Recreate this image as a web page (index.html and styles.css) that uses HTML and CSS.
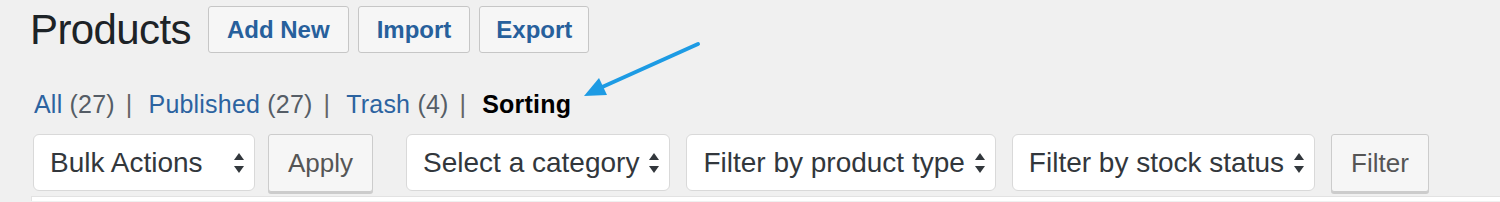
FILE: index.html
```html
<!DOCTYPE html>
<html lang="en">
<head>
  <meta charset="UTF-8">
  <meta name="viewport" content="width=device-width, initial-scale=1.0">
  <title>Products</title>
  <link rel="stylesheet" href="styles.css">
</head>
<body>
  <div class="wrap">
    <div class="heading">
      <h1>Products</h1>
      <a class="page-action" href="#">Add New</a>
      <a class="page-action" href="#">Import</a>
      <a class="page-action export" href="#">Export</a>
    </div>

    <ul class="subsubsub">
      <li><a href="#">All</a> <span class="count">(27)</span><span class="sep">|</span></li>
      <li><a href="#">Published</a> <span class="count">(27)</span><span class="sep">|</span></li>
      <li><a href="#">Trash</a> <span class="count">(4)</span><span class="sep">|</span></li>
      <li><a class="current" href="#">Sorting</a></li>
    </ul>

    <div class="tablenav">
      <div class="select bulk">
        <span>Bulk Actions</span>
        <svg class="updown" viewBox="0 0 10 20"><polygon points="0,7 5,0 10,7"/><polygon points="0,13 10,13 5,20"/></svg>
      </div>
      <button class="btn">Apply</button>

      <div class="filters">
        <div class="select">
          <span>Select a category</span>
          <svg class="updown" viewBox="0 0 10 20"><polygon points="0,7 5,0 10,7"/><polygon points="0,13 10,13 5,20"/></svg>
        </div>
        <div class="select">
          <span>Filter by product type</span>
          <svg class="updown" viewBox="0 0 10 20"><polygon points="0,7 5,0 10,7"/><polygon points="0,13 10,13 5,20"/></svg>
        </div>
        <div class="select">
          <span>Filter by stock status</span>
          <svg class="updown" viewBox="0 0 10 20"><polygon points="0,7 5,0 10,7"/><polygon points="0,13 10,13 5,20"/></svg>
        </div>
        <button class="btn filter">Filter</button>
      </div>
    </div>

    <div class="list-table"></div>
  </div>

  <!-- annotation arrow pointing at "Sorting" -->
  <svg class="callout" width="1500" height="202" viewBox="0 0 1500 202">
    <line x1="698" y1="44" x2="600" y2="88" stroke="#1d9be4" stroke-width="4" stroke-linecap="round"/>
    <polygon points="584,96 599,78 607,95" fill="#1d9be4"/>
  </svg>
</body>
</html>
```

FILE: styles.css
```css
body {
  margin: 0;
  padding: 0;
  background-color: #f0f0f0;
  font-family: "Liberation Sans", Arial, sans-serif;
  color: #32373c;
  overflow: hidden;
}

.wrap {
  padding: 0 0 0 30px;
}

.heading {
  display: flex;
  align-items: center;
  margin-top: 6px;
  height: 47px;
}

h1 {
  margin: 0 17px 0 0;
  font-size: 42px;
  font-weight: normal;
  line-height: 47px;
  letter-spacing: -0.6px;
  color: #1d2327;
}

.page-action {
  display: flex;
  align-items: center;
  box-sizing: border-box;
  height: 47px;
  padding: 0 18px;
  margin-right: 9px;
  border: 1px solid #c6c6c6;
  border-radius: 3px;
  background: #f6f6f6;
  color: #27609c;
  font-size: 24px;
  font-weight: bold;
  text-decoration: none;
}

.page-action.export {
  padding: 0 16px;
}

.subsubsub {
  display: flex;
  list-style: none;
  margin: 36px 0 0 0;
  padding: 0 0 0 4px;
  font-size: 25px;
  line-height: 30px;
  letter-spacing: 0.2px;
  color: #555d66;
}

.subsubsub a {
  color: #2c63a0;
  text-decoration: none;
}

.subsubsub a.current {
  color: #000;
  font-weight: bold;
}

.sep {
  margin: 0 16px 0 11px;
  color: #666;
}

.tablenav {
  display: flex;
  align-items: flex-start;
  margin-top: 15px;
  padding-left: 3px;
  height: 57px;
  margin-bottom: 5px;
}

.filters {
  display: flex;
  align-items: flex-start;
  gap: 16px;
  margin-left: 33px;
}

.select {
  display: flex;
  align-items: center;
  gap: 10px;
  box-sizing: border-box;
  height: 57px;
  padding: 0 10px 0 16px;
  border: 1px solid #d9d9d9;
  border-radius: 6px;
  background: #fff;
  font-size: 28px;
  color: #32373c;
}

.select.bulk {
  width: 222px;
  justify-content: space-between;
}

.updown {
  width: 10px;
  height: 20px;
  fill: #32373c;
  flex-shrink: 0;
}

.btn {
  box-sizing: border-box;
  height: 58px;
  margin-left: 13px;
  padding: 0 19px;
  border: 1px solid #cccccc;
  border-radius: 3px;
  background: #f6f6f6;
  box-shadow: 0 2px 0 #cccccc;
  font-family: inherit;
  font-size: 26px;
  color: #555;
}

.btn.filter {
  margin-left: 0;
}

.list-table {
  margin-left: 1px;
  height: 4px;
  background: #fff;
  border: 1px solid #e2e2e2;
  border-right: none;
  border-bottom: none;
}

.callout {
  position: absolute;
  left: 0;
  top: 0;
  pointer-events: none;
}
```
